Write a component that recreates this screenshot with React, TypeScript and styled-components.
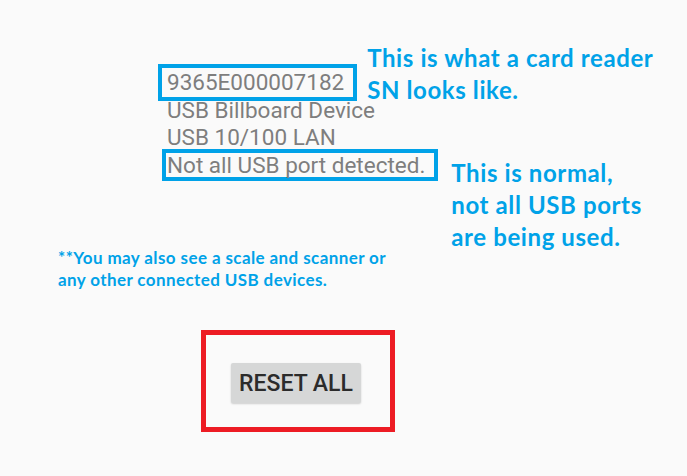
import React from "react";
import styled, { createGlobalStyle } from "styled-components";

const GlobalStyle = createGlobalStyle`
  html, body {
    margin: 0;
    padding: 0;
    background: #fafafa;
  }
  body {
    width: 687px;
    height: 476px;
    overflow: hidden;
  }
`;

const Page = styled.div`
  width: 687px;
  height: 476px;
  box-sizing: border-box;
  padding-top: 70px;
  background: #fafafa;
  display: flex;
  flex-direction: column;
`;

const DeviceList = styled.div`
  display: flex;
  flex-direction: column;
  margin-left: 167px;
  font-family: Roboto, "Liberation Sans", sans-serif;
  font-size: 22.5px;
  color: #7e7e7e;
`;

const Row = styled.div`
  display: flex;
  align-items: flex-start;
  height: 27px;
`;

const Line = styled.div`
  line-height: 27px;
  height: 27px;
  white-space: nowrap;
`;

const Boxed = styled.div<{ $left: number; $top: number; $inner: number; $bottom: number }>`
  border: 4px solid #00a2e8;
  white-space: nowrap;
  line-height: ${(p) => p.$inner}px;
  height: ${(p) => p.$inner}px;
  padding: 0 9px 0 ${(p) => p.$left - 4}px;
  margin: ${(p) => -p.$top}px 0 ${(p) => -p.$bottom}px ${(p) => -p.$left}px;
`;

const Note = styled.div<{ $gap: number; $top: number; $lines: number }>`
  font-family: Lato, "Open Sans", sans-serif;
  font-weight: 700;
  font-size: 24px;
  letter-spacing: 0.6px;
  line-height: 32px;
  color: #00a2e8;
  white-space: nowrap;
  margin-left: ${(p) => p.$gap}px;
  margin-top: ${(p) => p.$top}px;
  margin-bottom: ${(p) => 27 - p.$top - p.$lines * 32}px;
`;

const SmallNote = styled.div`
  margin: 69px 0 0 58px;
  font-family: Lato, "Open Sans", sans-serif;
  font-weight: 700;
  font-size: 17px;
  letter-spacing: 0.4px;
  line-height: 22px;
  color: #00a2e8;
  white-space: nowrap;
`;

const Highlight = styled.div`
  margin: 39px 0 0 201px;
  width: 194px;
  height: 102px;
  box-sizing: border-box;
  border: 5px solid #ed1c24;
  display: flex;
  align-items: center;
  justify-content: center;
`;

const ResetButton = styled.button`
  width: 130px;
  height: 40px;
  margin: 4px 0 0 -4px;
  border: none;
  border-radius: 2px;
  background: #d6d7d7;
  box-shadow: 0 1px 2px rgba(0, 0, 0, 0.18);
  font-family: Roboto, "Liberation Sans", sans-serif;
  font-weight: 500;
  font-size: 23px;
  color: #2b2b2b;
  padding: 0;
  cursor: pointer;
`;

export default function App() {
  return (
    <>
      <GlobalStyle />
      <Page>
        <DeviceList>
          <Row>
            <Boxed $left={9} $top={6} $inner={29} $bottom={4}>
              9365E000007182
            </Boxed>
            <Note $gap={10} $top={-28} $lines={2}>
              This is what a card reader
              <br />
              SN looks like.
            </Note>
          </Row>
          <Line>USB Billboard Device</Line>
          <Line>USB 10/100 LAN</Line>
          <Row>
            <Boxed $left={5} $top={2} $inner={24} $bottom={3}>
              Not all USB port detected.
            </Boxed>
            <Note $gap={13} $top={6} $lines={3}>
              This is normal,
              <br />
              not all USB ports
              <br />
              are being used.
            </Note>
          </Row>
        </DeviceList>
        <SmallNote>
          **You may also see a scale and scanner or
          <br />
          any other connected USB devices.
        </SmallNote>
        <Highlight>
          <ResetButton>RESET ALL</ResetButton>
        </Highlight>
      </Page>
    </>
  );
}
